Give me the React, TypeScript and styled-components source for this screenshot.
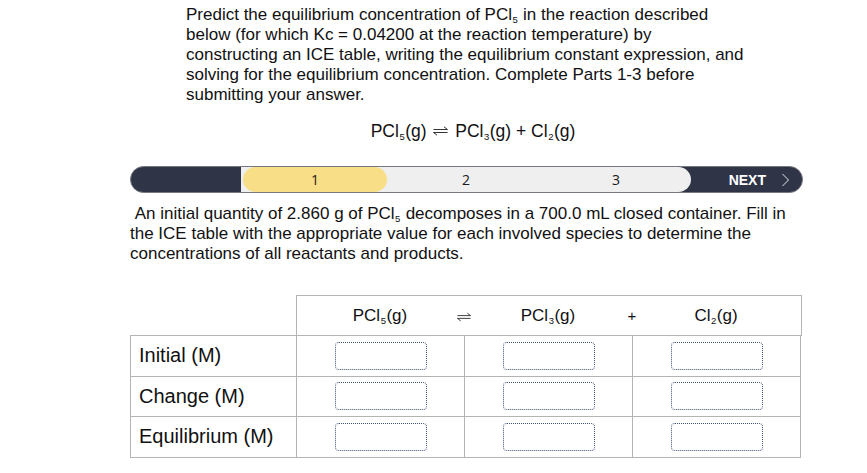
import styled, { createGlobalStyle } from "styled-components"

const GlobalStyle = createGlobalStyle`
  * { box-sizing: border-box; }
  body {
    margin: 0;
    background: #ffffff;
    font-family: "Liberation Sans", Arial, sans-serif;
    color: #111111;
  }
`

const EquilArrow = ({ w = 15 }: { w?: number }) => (
  <svg width={w} height="10" viewBox="0 0 15 10" fill="none" stroke="#333" strokeWidth="1">
    <path d="M0.5 3.5 H14.5 L11 0.8" />
    <path d="M14.5 6.5 H0.5 L4 9.2" />
  </svg>
)

const Chevron = () => (
  <svg width="9" height="14" viewBox="0 0 9 14" fill="none" stroke="#e8e9ee" strokeWidth="1">
    <path d="M1.5 1 L7.5 7 L1.5 13" />
  </svg>
)

const App = () => {
  return (
    <>
      <GlobalStyle />
      <Page>
        <Intro>
          <Para>
            Predict the equilibrium concentration of PCl<Sub>5</Sub> in the reaction described<br />
            below (for which Kc = 0.04200 at the reaction temperature) by<br />
            constructing an ICE table, writing the equilibrium constant expression, and<br />
            solving for the equilibrium concentration. Complete Parts 1-3 before<br />
            submitting your answer.
          </Para>
          <Equation>
            PCl<Sub>5</Sub>(g) <EquilArrow /> PCl<Sub>3</Sub>(g) + Cl<Sub>2</Sub>(g)
          </Equation>
        </Intro>

        <Bar>
          <BarEnd />
          <Track>
            <Step $active>1</Step>
            <Step>2</Step>
            <Step>3</Step>
          </Track>
          <NextButton>
            NEXT
            <Chevron />
          </NextButton>
        </Bar>

        <Para>
          &nbsp;An initial quantity of 2.860 g of PCl<Sub>5</Sub> decomposes in a 700.0 mL closed container. Fill in<br />
          the ICE table with the appropriate value for each involved species to determine the<br />
          concentrations of all reactants and products.
        </Para>

        <Table>
          <HeaderRow>
            <Species>PCl<Sub>5</Sub>(g)</Species>
            <Symbol><EquilArrow w={14} /></Symbol>
            <Species>PCl<Sub>3</Sub>(g)</Species>
            <Symbol>+</Symbol>
            <Species>Cl<Sub>2</Sub>(g)</Species>
          </HeaderRow>
          <Body>
            {["Initial (M)", "Change (M)", "Equilibrium (M)"].map((label) => (
              <Row key={label}>
                <Label>{label}</Label>
                <Cell><Entry type="text" /></Cell>
                <Cell><Entry type="text" /></Cell>
                <Cell><Entry type="text" /></Cell>
              </Row>
            ))}
          </Body>
        </Table>
      </Page>
    </>
  )
}

export default App

const Page = styled.div`
  width: 673px;
  margin-left: 130px;
  padding-top: 5px;
`

const Intro = styled.div`
  width: 574px;
  margin-left: 56px;
`

const Para = styled.p`
  margin: 0;
  font-size: 17px;
  line-height: 20px;
  color: #111;
  white-space: nowrap;
`

const Sub = styled.sub`
  font-size: 9.5px;
  line-height: 0;
  vertical-align: -3px;
  margin: 0 0.5px;
`

const Equation = styled.div`
  margin-top: 16px;
  text-align: center;
  font-size: 17.5px;
  line-height: 20px;

  svg {
    vertical-align: 1px;
    margin: 0 2px;
  }
`

const Bar = styled.div`
  margin-top: 25px;
  height: 27px;
  display: flex;
  background: #2f3447;
  border: 1.5px solid #75787f;
  border-radius: 14px;
  overflow: hidden;
  margin-bottom: 11px;
`

const BarEnd = styled.div`
  width: 110px;
`

const Track = styled.div`
  display: flex;
  width: 450px;
  background: #efefef;
  border-radius: 0 13px 13px 0;
`

const Step = styled.div<{ $active?: boolean }>`
  width: ${(p) => (p.$active ? "144px" : "150px")};
  margin: ${(p) => (p.$active ? "0 4px 0 2px" : "0")};
  display: flex;
  align-items: center;
  justify-content: center;
  font-family: "Open Sans", "Noto Sans", sans-serif;
  font-size: 14px;
  color: #1a1a1a;
  background: ${(p) => (p.$active ? "#f8de87" : "transparent")};
  border-radius: ${(p) => (p.$active ? "13px" : "0")};
`

const NextButton = styled.div`
  flex: 1;
  display: flex;
  align-items: center;
  justify-content: flex-end;
  gap: 15px;
  padding-right: 12px;
  color: #ffffff;
  font-weight: 700;
  font-size: 14px;
`

const Table = styled.div`
  margin-top: 31px;
`

const HeaderRow = styled.div`
  margin-left: 166px;
  width: 506px;
  height: 40px;
  padding: 0 15px;
  display: grid;
  grid-template-columns: 136px 32px 136px 32px 136px;
  align-items: center;
  border: 1.5px solid #b4b4b4;
  border-bottom: none;
  font-size: 17px;
`

const Species = styled.div`
  text-align: center;
`

const Symbol = styled.div`
  text-align: center;
  font-size: 15px;

  svg {
    vertical-align: middle;
  }
`

const Body = styled.div`
  width: 672px;
  border-top: 1.5px solid #b4b4b4;
  border-left: 1.5px solid #b4b4b4;
`

const Row = styled.div`
  display: grid;
  grid-template-columns: 166px 168px 168px 168px;
  height: 40.5px;
`

const Label = styled.div`
  display: flex;
  align-items: center;
  padding-left: 8px;
  font-size: 20px;
  color: #111;
  border-right: 1.5px solid #b4b4b4;
  border-bottom: 1.5px solid #b4b4b4;
`

const Cell = styled.div`
  display: flex;
  align-items: center;
  justify-content: center;
  border-right: 1.5px solid #b4b4b4;
  border-bottom: 1.5px solid #b4b4b4;
`

const Entry = styled.input`
  width: 92px;
  height: 28px;
  border: 1px dotted #3d4f70;
  border-radius: 4px;
  background: #ffffff;
  outline: none;
  padding: 0 4px;
  font-size: 14px;
`
